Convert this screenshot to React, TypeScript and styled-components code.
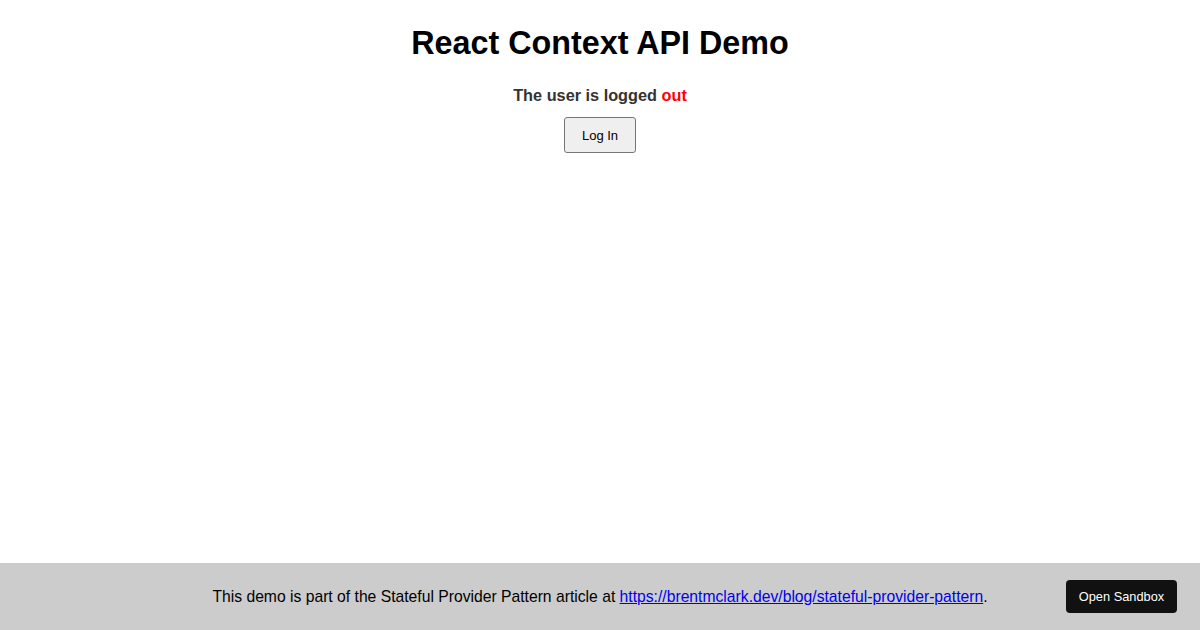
import React, { useState } from 'react'
import styled, { createGlobalStyle } from 'styled-components'

const GlobalStyle = createGlobalStyle`
  html, body {
    margin: 0;
    padding: 0;
    height: 100%;
    font-family: "Liberation Sans", Arial, Helvetica, sans-serif;
    background: #fff;
  }
  #root {
    height: 100%;
  }
`

function App() {
  const [loggedIn, setLoggedIn] = useState(false)

  return (
    <Page>
      <GlobalStyle />
      <Main>
        <Title>React Context API Demo</Title>
        <Status>
          The user is logged <StatusWord $on={loggedIn}>{loggedIn ? 'in' : 'out'}</StatusWord>
        </Status>
        <LoginButton onClick={() => setLoggedIn(!loggedIn)}>
          {loggedIn ? 'Log Out' : 'Log In'}
        </LoginButton>
      </Main>
      <Footer>
        <FooterText>
          This demo is part of the Stateful Provider Pattern article at{' '}
          <FooterLink href="#">https://brentmclark.dev/blog/stateful-provider-pattern</FooterLink>.
        </FooterText>
        <SandboxButton>Open Sandbox</SandboxButton>
      </Footer>
    </Page>
  )
}

export default App

const Page = styled.div`
  display: flex;
  flex-direction: column;
  height: 100vh;
`

const Main = styled.main`
  flex: 1;
  display: flex;
  flex-direction: column;
  align-items: center;
  padding-top: 25px;
`

const Title = styled.h1`
  margin: 0 0 24px;
  font-size: 32.3px;
  font-weight: 700;
  color: #000;
`

const Status = styled.p`
  margin: 0 0 12px;
  font-size: 16.3px;
  font-weight: 700;
  color: #333;
`

const StatusWord = styled.span<{ $on: boolean }>`
  color: ${p => (p.$on ? '#0a0' : '#f00')};
`

const LoginButton = styled.button`
  width: 72px;
  height: 36px;
  font-family: "Liberation Sans", Arial, sans-serif;
  font-size: 13px;
  color: #000;
  background: #efefef;
  border: 1px solid #767676;
  border-radius: 3px;
  cursor: pointer;
`

const Footer = styled.footer`
  display: grid;
  grid-template-columns: 1fr auto 1fr;
  align-items: center;
  height: 67px;
  padding: 0 23px;
  background: #ccc;
`

const FooterText = styled.p`
  grid-column: 2;
  margin: 0;
  font-size: 15.7px;
  color: #000;
`

const FooterLink = styled.a`
  color: #00e;
  text-decoration: underline;
`

const SandboxButton = styled.button`
  grid-column: 3;
  justify-self: end;
  width: 111px;
  height: 33px;
  font-family: "Liberation Sans", Arial, sans-serif;
  font-size: 12.8px;
  color: #fff;
  background: #111;
  border: none;
  border-radius: 4px;
  cursor: pointer;
`
